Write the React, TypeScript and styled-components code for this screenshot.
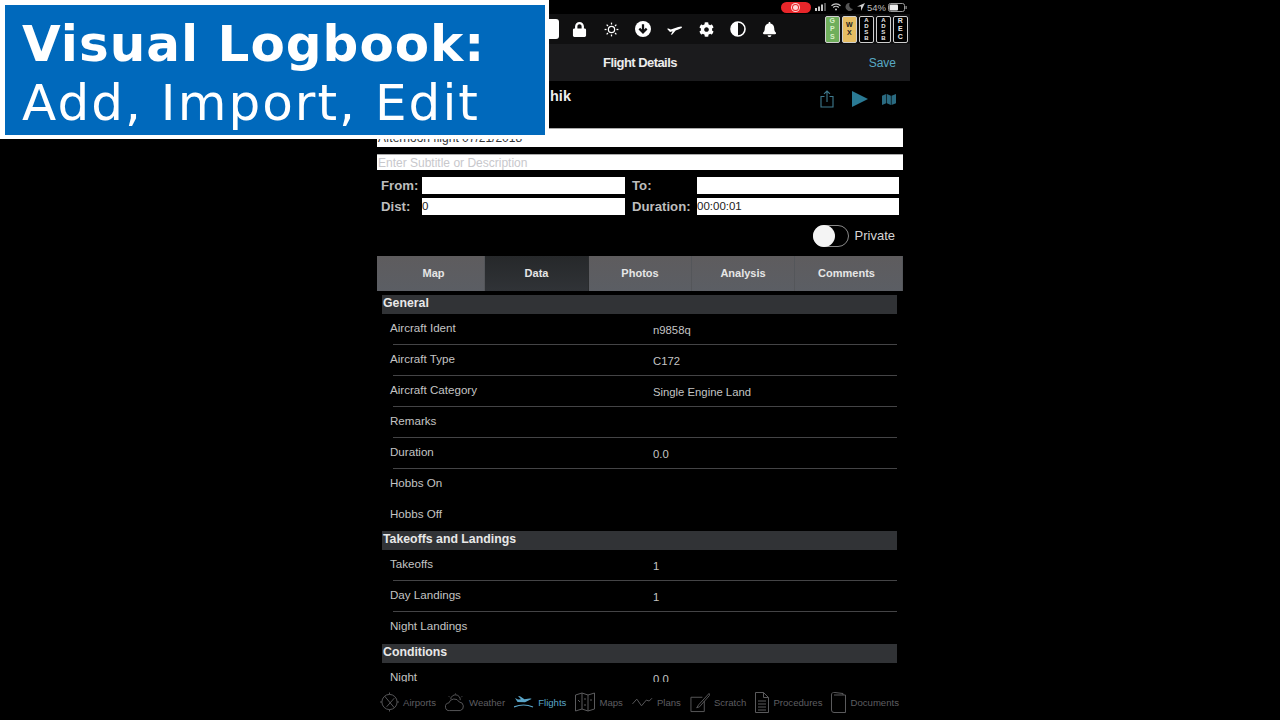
import * as React from 'react';
import styled, {createGlobalStyle} from 'styled-components';
import {FaBell, FaCog, FaLock} from 'react-icons/fa';

const GlobalStyle = createGlobalStyle`
    html, body {
        margin: 0;
        padding: 0;
        background: #000;
    }
    body {
        font-family: 'Liberation Sans', Arial, sans-serif;
        overflow: hidden;
    }
`;

const Page = styled.div`
    position: relative;
    width: 1280px;
    height: 720px;
    overflow: hidden;
    background: #000;
`;

const Banner = styled.div`
    position: absolute;
    left: 0;
    top: 0;
    width: 549px;
    height: 139px;
    box-sizing: border-box;
    border: 5px solid #fff;
    border-right-width: 4px;
    border-bottom-width: 4px;
    background: #0069bc;
    color: #fff;
    font-family: 'DejaVu Sans', sans-serif;
    padding-left: 17px;
`;

const BannerLine = styled.div<{$bold?: boolean}>`
    font-size: 50px;
    line-height: 59px;
    font-weight: ${props => (props.$bold ? 700 : 400)};
    letter-spacing: ${props => (props.$bold ? '1px' : '2.05px')};
    white-space: nowrap;
    &:first-child {
        margin-top: 10px;
    }
`;

const Frame = styled.div`
    width: 540px;
    height: 720px;
    margin: 0 auto;
    display: flex;
    flex-direction: column;
    background: #000;
`;

const StatusBar = styled.div`
    height: 14px;
    flex: none;
    display: flex;
    align-items: center;
    justify-content: flex-end;
    gap: 4px;
    padding-right: 3px;
    color: #bdbdbd;
    font-size: 9.5px;
`;

const StatusText = styled.span`
    margin: 0 -2px;
`;

const RecordPill = styled.div`
    width: 30px;
    height: 11px;
    border-radius: 6px;
    background: #e8262a;
    display: flex;
    align-items: center;
    justify-content: center;
`;

const RecordDot = styled.div`
    width: 5px;
    height: 5px;
    border-radius: 50%;
    background: #ffd5d5;
    box-shadow: 0 0 0 1px #e8262a, 0 0 0 2px #ffd5d5;
`;

const Toolbar = styled.div`
    height: 30px;
    flex: none;
    background: #101011;
    display: flex;
    align-items: center;
    padding-left: 175px;
`;

const SearchStub = styled.div`
    width: 14px;
    height: 20px;
    background: #fff;
    border-radius: 3px;
    margin-right: 5px;
`;

const ToolIcon = styled.div`
    width: 31.7px;
    flex: none;
    display: flex;
    justify-content: center;
    align-items: center;
    color: #fff;
`;

const Badges = styled.div`
    margin-left: 39px;
    display: flex;
    gap: 2px;
`;

const Badge = styled.div<{$bg?: string; $color?: string; $tight?: boolean}>`
    width: 15px;
    height: 27px;
    box-sizing: border-box;
    border: 1px solid #cfcfcf;
    border-radius: 2px;
    background: ${props => props.$bg ?? '#000'};
    color: ${props => props.$color ?? '#e8e8e8'};
    font-size: ${props => (props.$tight ? 6 : 7)}px;
    font-weight: 700;
    line-height: ${props => (props.$tight ? 6 : 8)}px;
    text-align: center;
    display: flex;
    flex-direction: column;
    justify-content: center;
`;

const NavBar = styled.div`
    height: 37px;
    flex: none;
    background: #1b1b1d;
    display: flex;
    align-items: center;
    padding: 0 14px 0 233px;
    justify-content: space-between;
`;

const NavTitle = styled.div`
    color: #ececec;
    font-size: 13px;
    font-weight: 700;
    letter-spacing: -0.55px;
`;

const NavAction = styled.div`
    color: #58a9c4;
    font-size: 12px;
`;

const TitleRow = styled.div`
    height: 47px;
    flex: none;
    display: flex;
    padding-left: 180px;
    padding-right: 14px;
    align-items: flex-start;
    justify-content: space-between;
`;

const FlightName = styled.div`
    margin-top: 7px;
    color: #eee;
    font-size: 14.5px;
    font-weight: 700;
`;

const TitleActions = styled.div`
    display: flex;
    align-items: center;
    gap: 14px;
    margin-top: 9px;
`;

const ShareWrap = styled.div`
    display: flex;
    margin-right: 4px;
`;

const Form = styled.div`
    flex: none;
    padding: 0 7px;
    display: flex;
    flex-direction: column;
`;

const WideInput = styled.div<{$height: number; $muted?: boolean}>`
    height: ${props => props.$height}px;
    background: #fff;
    border-top: 1px solid #aaa;
    box-sizing: border-box;
    margin-bottom: 7px;
    font-size: 12px;
    color: ${props => (props.$muted ? '#c8c8cc' : '#333')};
    line-height: ${props => props.$height}px;
    padding-left: 1px;
    white-space: nowrap;
`;

const FieldGrid = styled.div`
    display: grid;
    grid-template-columns: 45px 203px 7px 65px 202px;
    grid-auto-rows: 17px;
    row-gap: 4px;
`;

const FieldLabel = styled.div<{$col: number}>`
    grid-column: ${props => props.$col};
    color: #bdbdbd;
    font-size: 13.2px;
    font-weight: 700;
    line-height: 17px;
    padding-left: 4px;
`;

const FieldLabelRight = styled(FieldLabel)`
    padding-left: 0;
    white-space: nowrap;
`;

const FieldInput = styled.div<{$col: number}>`
    grid-column: ${props => props.$col};
    background: #fff;
    color: #222;
    font-size: 11.5px;
    line-height: 17px;
`;

const PrivateRow = styled.div`
    height: 41px;
    flex: none;
    display: flex;
    align-items: center;
    justify-content: flex-end;
    gap: 6px;
    padding-right: 15px;
    color: #d5d5d5;
    font-size: 13px;
`;

const Switch = styled.div`
    width: 36px;
    height: 22px;
    border: 1px solid #8a8a8a;
    border-radius: 11px;
    box-sizing: border-box;
    display: flex;
    align-items: center;
`;

const SwitchKnob = styled.div`
    width: 22px;
    height: 22px;
    margin-left: -1px;
    border-radius: 50%;
    background: #f4f4f4;
`;

const Tabs = styled.div`
    margin: 0 7px;
    height: 35px;
    flex: none;
    display: grid;
    grid-template-columns: 108px 104px 103px 103px 108px;
`;

const TabCell = styled.div<{$active?: boolean}>`
    background: ${props =>
        props.$active
            ? 'linear-gradient(#26282a, #303337)'
            : 'linear-gradient(#5e5c5e, #5b5e64)'};
    border-right: 1px solid ${props => (props.$active ? '#2a2c2e' : '#54565a')};
    box-sizing: border-box;
    display: flex;
    align-items: center;
    justify-content: center;
    padding-bottom: 1px;
    color: #e6e6e6;
    font-size: 11px;
    font-weight: 700;
    &:first-child {
        padding-left: 6px;
    }
    &:last-child {
        padding-right: 4px;
    }
`;

const Table = styled.div`
    margin: 4px 13px 0 12px;
    height: 387px;
    overflow: hidden;
    flex: none;
`;

const SectionHeader = styled.div`
    height: 19px;
    background: #313336;
    color: #e8e8e8;
    font-size: 12.3px;
    font-weight: 700;
    line-height: 17px;
    padding-left: 1px;
`;

const SectionGap = styled.div<{$height: number}>`
    height: ${props => props.$height}px;
`;

const Row = styled.div<{$divider: boolean}>`
    height: 31px;
    box-sizing: border-box;
    margin-left: 11px;
    display: grid;
    grid-template-columns: 260px 1fr;
    border-bottom: 1px solid ${props => (props.$divider ? '#444446' : 'transparent')};
`;

const RowLabel = styled.div`
    color: #c4c4c4;
    font-size: 11.6px;
    padding-top: 7px;
    line-height: 13px;
    margin-left: -3px;
`;

const RowValue = styled.div`
    color: #c4c4c4;
    font-size: 11.3px;
    padding-top: 9.5px;
    line-height: 13px;
`;

const TabBar = styled.div`
    height: 38px;
    box-sizing: border-box;
    flex: none;
    display: flex;
    align-items: flex-start;
    padding: 9px 0 0 10px;
    gap: 9px;
`;

const BarItem = styled.div<{$active?: boolean}>`
    display: flex;
    align-items: center;
    gap: 4px;
    color: ${props => (props.$active ? '#5aa5c8' : '#5e5e60')};
    font-size: 9.6px;
    height: 22px;
    white-space: nowrap;
`;

function Sun() {
    const rays = [0, 45, 90, 135, 180, 225, 270, 315];
    return (
        <svg width="15" height="15" viewBox="0 0 24 24" fill="none" stroke="#fff" strokeWidth="2">
            <circle cx="12" cy="12" r="5" />
            {rays.map(a => (
                <line key={a} x1="12" y1="1" x2="12" y2="4" transform={`rotate(${a} 12 12)`} />
            ))}
        </svg>
    );
}

function DownCircle() {
    return (
        <svg width="16" height="16" viewBox="0 0 24 24">
            <circle cx="12" cy="12" r="12" fill="#fff" />
            <path d="M12 5v12M6.5 11.5 12 17l5.5-5.5" fill="none" stroke="#101011" strokeWidth="3.4" />
        </svg>
    );
}

function Departure() {
    return (
        <svg width="15" height="11" viewBox="0 0 20 14" fill="#fff">
            <path d="M0 6 2 5.500 5 7 15 3.800C18 3 20 2.500 20 4c0 1-2 2-4 2.700L11.500 8.300 7 13.500 5 14 7.500 9.300 4 10.300Z" />
        </svg>
    );
}

function Contrast() {
    return (
        <svg width="16" height="16" viewBox="0 0 24 24">
            <circle cx="12" cy="12" r="10.5" fill="none" stroke="#fff" strokeWidth="2.4" />
            <path d="M12 1.5a10.5 10.5 0 0 0 0 21z" fill="#fff" />
        </svg>
    );
}

function Signal() {
    return (
        <svg width="12" height="8" viewBox="0 0 12 8" fill="#c8c8c8">
            <rect x="0" y="5" width="2" height="3" />
            <rect x="3" y="3.5" width="2" height="4.5" />
            <rect x="6" y="1.5" width="2" height="6.5" />
            <rect x="9" y="0" width="2" height="8" fill="#555" />
        </svg>
    );
}

function Wifi() {
    return (
        <svg width="10" height="8" viewBox="0 0 20 16" fill="none" stroke="#c8c8c8" strokeWidth="2.4">
            <path d="M1 5.5c5-5 13-5 18 0M4.5 9c3-3 8-3 11 0" />
            <circle cx="10" cy="13" r="2" fill="#c8c8c8" stroke="none" />
        </svg>
    );
}

function Moon() {
    return (
        <svg width="8" height="8" viewBox="0 0 10 10" fill="#555">
            <path d="M6 0a5 5 0 1 0 4 7.5A5 5 0 0 1 6 0z" />
        </svg>
    );
}

function Arrow() {
    return (
        <svg width="8" height="8" viewBox="0 0 10 10" fill="#d0d0d0">
            <path d="M10 0 0 4.5h5V10z" />
        </svg>
    );
}

function Battery() {
    return (
        <svg width="19" height="9" viewBox="0 0 19 9">
            <rect x="0.5" y="0.5" width="16" height="8" rx="2" fill="none" stroke="#999" />
            <rect x="1.5" y="1.5" width="8.5" height="6" rx="1" fill="#eee" />
            <rect x="17.5" y="3" width="1.2" height="3" fill="#999" />
        </svg>
    );
}

function ShareIcon() {
    return (
        <svg width="14" height="18" viewBox="0 0 14 18" fill="none" stroke="#3f7a8e" strokeWidth="1.1">
            <path d="M4.5 6.5H1v10.5h12V6.5H9.5M7 12V1M4 3.8 7 1l3 2.8" />
        </svg>
    );
}

function PlayIcon() {
    return (
        <svg width="16" height="16" viewBox="0 0 16 16" fill="#2a7a94">
            <path d="M0 0 16 8 0 16z" />
        </svg>
    );
}

function MapSolidIcon() {
    return (
        <svg width="14" height="13" viewBox="0 0 15 12" fill="#2a6a80">
            <path d="M0 2 4.5 0v10L0 12zM5.2 0 9.5 2v10L5.2 10zM10.2 2 15 0v10l-4.8 2z" />
        </svg>
    );
}

const barStroke = {fill: 'none', stroke: '#5a5a5c', strokeWidth: 1};

function AirportsIcon() {
    return (
        <svg width="19" height="20" viewBox="0 0 20 20" {...barStroke}>
            <circle cx="10" cy="10" r="8" />
            <path d="M5 4l10 12M15 6l-8 9M10 0v2M10 18v2M0 10h2M18 10h2" />
        </svg>
    );
}

function WeatherIcon() {
    return (
        <svg width="20" height="20" viewBox="0 0 21 20" {...barStroke}>
            <path d="M5 19a4 4 0 0 1-1-8 6 6 0 0 1 11-1 4.6 4.6 0 0 1 1 9z" />
            <path d="M6 7a5 5 0 0 1 10 1M11 1v1M4 4l1 1M18 4l-1 1" />
        </svg>
    );
}

function FlightsIcon() {
    return (
        <svg width="20" height="16" viewBox="0 0 20 16" fill="#5aa5c8">
            <path d="M1 4l3 1.5 3-.2-3-3.3 2 .2 4.500 3 5-.7c2-.3 2.500.3 1 1L11 8.300 3.500 8z" />
            <path d="M0 13c6-2.500 13-2.500 19 0" fill="none" stroke="#5aa5c8" strokeWidth="1.2" />
        </svg>
    );
}

function MapsIcon() {
    return (
        <svg width="20" height="20" viewBox="0 0 20 20" {...barStroke}>
            <path d="M0.500 3 7 1l6 2 6.500-2v16L13 19l-6-2-6.500 2zM7 1v16M13 3v16" />
            <path d="M3 8l2 2M10 6v2M16 7v2M10 12v2" />
        </svg>
    );
}

function PlansIcon() {
    return (
        <svg width="21" height="12" viewBox="0 0 22 12" {...barStroke}>
            <path d="M0.500 8 5 3l5 7 5-6 3 1 3-3" />
        </svg>
    );
}

function ScratchIcon() {
    return (
        <svg width="20" height="21" viewBox="0 0 21 21" {...barStroke}>
            <path d="M13 5H1v15h14V9" />
            <path d="M20 1 9 13l-2 3 3-1L20.500 3z" />
        </svg>
    );
}

function ProceduresIcon() {
    return (
        <svg width="14" height="21" viewBox="0 0 14 21" {...barStroke}>
            <path d="M0.500 0.500h8l5 5v15h-13zM8.500 0.500v5h5M3 9h8M3 12h8M3 15h8M3 18h8" />
        </svg>
    );
}

function DocumentsIcon() {
    return (
        <svg width="15" height="21" viewBox="0 0 15 21" {...barStroke}>
            <path d="M3 3h11.500v17.500H3A2.500 2.500 0 0 1 .5 18V3A2.500 2.500 0 0 1 4 .5l8 1V3" />
        </svg>
    );
}

const sections = [
    {
        title: 'General',
        gap: 0,
        rows: [
            ['Aircraft Ident', 'n9858q'],
            ['Aircraft Type', 'C172'],
            ['Aircraft Category', 'Single Engine Land'],
            ['Remarks', ''],
            ['Duration', '0.0'],
            ['Hobbs On', ''],
            ['Hobbs Off', ''],
        ],
    },
    {
        title: 'Takeoffs and Landings',
        gap: 1,
        rows: [
            ['Takeoffs', '1'],
            ['Day Landings', '1'],
            ['Night Landings', ''],
        ],
    },
    {
        title: 'Conditions',
        gap: 0,
        rows: [['Night', '0.0']],
    },
];

const tabs = ['Map', 'Data', 'Photos', 'Analysis', 'Comments'];

export default function App() {
    return (
        <Page>
            <GlobalStyle />
            <Frame>
                <StatusBar>
                    <RecordPill>
                        <RecordDot />
                    </RecordPill>
                    <Signal />
                    <Wifi />
                    <Moon />
                    <Arrow />
                    <StatusText>54%</StatusText>
                    <Battery />
                </StatusBar>
                <Toolbar>
                    <SearchStub />
                    <ToolIcon>
                        <FaLock size={15} />
                    </ToolIcon>
                    <ToolIcon>
                        <Sun />
                    </ToolIcon>
                    <ToolIcon>
                        <DownCircle />
                    </ToolIcon>
                    <ToolIcon>
                        <Departure />
                    </ToolIcon>
                    <ToolIcon>
                        <FaCog size={15} />
                    </ToolIcon>
                    <ToolIcon>
                        <Contrast />
                    </ToolIcon>
                    <ToolIcon>
                        <FaBell size={15} />
                    </ToolIcon>
                    <Badges>
                        <Badge $bg="#6fae5c" $color="#d8f0c8">
                            <span>G</span>
                            <span>P</span>
                            <span>S</span>
                        </Badge>
                        <Badge $bg="#e6bd62" $color="#222">
                            <span>W</span>
                            <span>X</span>
                        </Badge>
                        <Badge $tight>
                            <span>A</span>
                            <span>D</span>
                            <span>S</span>
                            <span>B</span>
                        </Badge>
                        <Badge $tight>
                            <span>A</span>
                            <span>D</span>
                            <span>S</span>
                            <span>B</span>
                        </Badge>
                        <Badge>
                            <span>R</span>
                            <span>E</span>
                            <span>C</span>
                        </Badge>
                    </Badges>
                </Toolbar>
                <NavBar>
                    <NavTitle>Flight Details</NavTitle>
                    <NavAction>Save</NavAction>
                </NavBar>
                <TitleRow>
                    <FlightName>hik</FlightName>
                    <TitleActions>
                        <ShareWrap>
                            <ShareIcon />
                        </ShareWrap>
                        <PlayIcon />
                        <MapSolidIcon />
                    </TitleActions>
                </TitleRow>
                <Form>
                    <WideInput $height={19}>Afternoon flight 07/21/2018</WideInput>
                    <WideInput $height={16} $muted>
                        Enter Subtitle or Description
                    </WideInput>
                    <FieldGrid>
                        <FieldLabel $col={1}>From:</FieldLabel>
                        <FieldInput $col={2} />
                        <FieldLabelRight $col={4}>To:</FieldLabelRight>
                        <FieldInput $col={5} />
                        <FieldLabel $col={1}>Dist:</FieldLabel>
                        <FieldInput $col={2}>0</FieldInput>
                        <FieldLabelRight $col={4}>Duration:</FieldLabelRight>
                        <FieldInput $col={5}>00:00:01</FieldInput>
                    </FieldGrid>
                </Form>
                <PrivateRow>
                    <Switch>
                        <SwitchKnob />
                    </Switch>
                    Private
                </PrivateRow>
                <Tabs>
                    {tabs.map(tab => (
                        <TabCell key={tab} $active={tab === 'Data'}>
                            {tab}
                        </TabCell>
                    ))}
                </Tabs>
                <Table>
                    {sections.map(section => (
                        <React.Fragment key={section.title}>
                            <SectionHeader>{section.title}</SectionHeader>
                            {section.rows.map(([label, value], index) => (
                                <Row key={label} $divider={index < section.rows.length - 1 && label !== 'Hobbs On'}>
                                    <RowLabel>{label}</RowLabel>
                                    <RowValue>{value}</RowValue>
                                </Row>
                            ))}
                            <SectionGap $height={section.gap} />
                        </React.Fragment>
                    ))}
                </Table>
                <TabBar>
                    <BarItem>
                        <AirportsIcon />
                        Airports
                    </BarItem>
                    <BarItem>
                        <WeatherIcon />
                        Weather
                    </BarItem>
                    <BarItem $active>
                        <FlightsIcon />
                        Flights
                    </BarItem>
                    <BarItem>
                        <MapsIcon />
                        Maps
                    </BarItem>
                    <BarItem>
                        <PlansIcon />
                        Plans
                    </BarItem>
                    <BarItem>
                        <ScratchIcon />
                        Scratch
                    </BarItem>
                    <BarItem>
                        <ProceduresIcon />
                        Procedures
                    </BarItem>
                    <BarItem>
                        <DocumentsIcon />
                        Documents
                    </BarItem>
                </TabBar>
            </Frame>
            <Banner>
                <BannerLine $bold>Visual Logbook:</BannerLine>
                <BannerLine>Add, Import, Edit</BannerLine>
            </Banner>
        </Page>
    );
}
